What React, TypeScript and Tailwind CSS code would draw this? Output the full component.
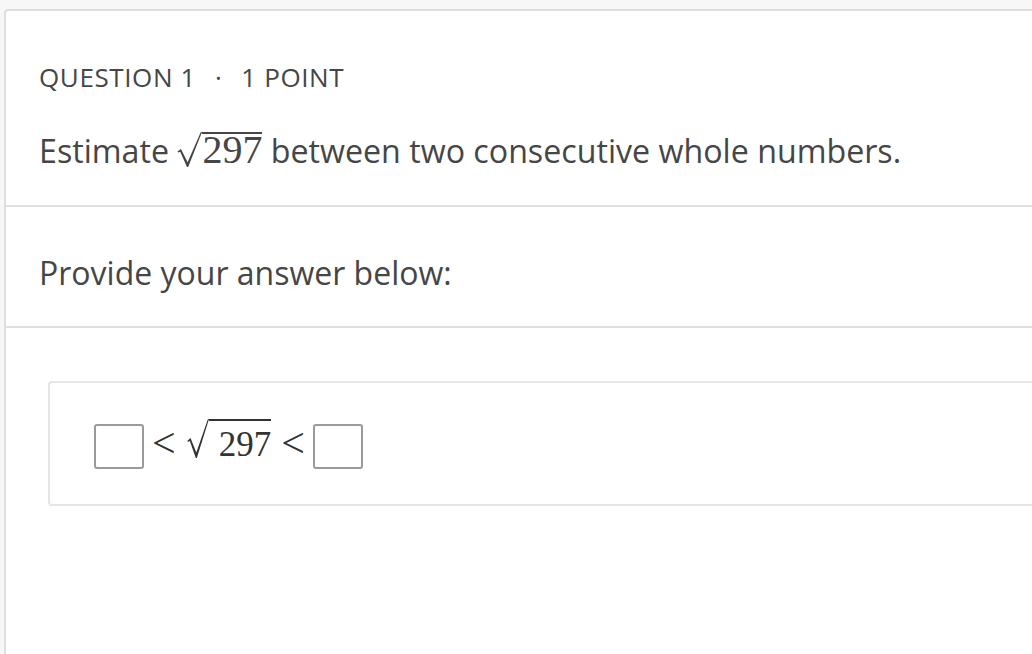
import React from "react";

// radical sign drawn as a filled shape, stretched to the box it sits in
function Radical({ className, color }: { className?: string; color: string }) {
  return (
    <svg
      viewBox="0 0 25 36"
      preserveAspectRatio="none"
      className={className}
      aria-hidden="true"
    >
      <path
        d="M0.5 20 L4 17.6 L10.6 31 L23.8 0 L25 0 L11.2 36 L10 36 L3.2 20.4 L1.1 21.2 Z"
        fill={color}
      />
    </svg>
  );
}

function InlineSqrt({ value }: { value: string }) {
  return (
    <span className="relative inline-block pl-[25px] font-['Liberation_Serif',serif] text-[40px] leading-[31px]">
      <Radical color="#464646" className="absolute left-0 top-0 h-[35px] w-[25px]" />
      <span className="inline-block border-t-2 border-[#464646] leading-[31px]">
        {value}
      </span>
    </span>
  );
}

function AnswerBox() {
  return (
    <div className="h-[45px] w-[50px] mt-[5px] shrink-0 rounded-[3px] border-2 border-[#9a9a9a] bg-white" />
  );
}

function AnswerRow() {
  return (
    <div className="flex items-start font-['Liberation_Serif',serif] text-[#333]">
      <AnswerBox />
      <span className="ml-[8px] mt-[3px] text-[42px] leading-none">&lt;</span>
      {/* square root with a taller sign, like the typeset maths */}
      <div className="relative ml-[11px] pl-[22px]">
        <Radical color="#333" className="absolute left-0 top-0 h-[39px] w-[22px]" />
        <div className="border-t-2 border-[#333] pl-[10px] pt-[6px] text-[35px] leading-none">
          297
        </div>
      </div>
      <span className="ml-[10px] mt-[3px] text-[42px] leading-none">&lt;</span>
      <div className="ml-[8px]">
        <AnswerBox />
      </div>
    </div>
  );
}

export default function App() {
  return (
    <div className="h-[654px] w-[1032px] overflow-hidden bg-[#f7f7f7] pl-[4px] pt-[9px] font-['Open_Sans',sans-serif] text-[#464646]">
      <div className="h-[700px] w-[1100px] rounded-tl-[4px] border-l-2 border-t-2 border-[#dedede] bg-white">
        {/* question */}
        <div className="h-[196px] border-b-2 border-[#e0e0e0] pl-[33px] pt-[50px]">
          <div className="text-[26px] leading-[32px] tracking-[0.6px]">
            QUESTION 1
            <span className="px-[19px]">·</span>
            1 POINT
          </div>
          <p className="mt-[38px] text-[32.2px] leading-[40px]">
            Estimate <InlineSqrt value="297" /> between two consecutive whole
            numbers.
          </p>
        </div>

        {/* prompt */}
        <div className="h-[121px] border-b-2 border-[#e0e0e0] pl-[33px] pt-[46px]">
          <p className="text-[32px] leading-[40px]">Provide your answer below:</p>
        </div>

        {/* answer */}
        <div className="pl-[42px] pt-[53px]">
          <div className="h-[125px] rounded-[4px] border-2 border-[#e6e6e6] bg-white pl-[44px] pt-[36px]">
            <AnswerRow />
          </div>
        </div>
      </div>
    </div>
  );
}
